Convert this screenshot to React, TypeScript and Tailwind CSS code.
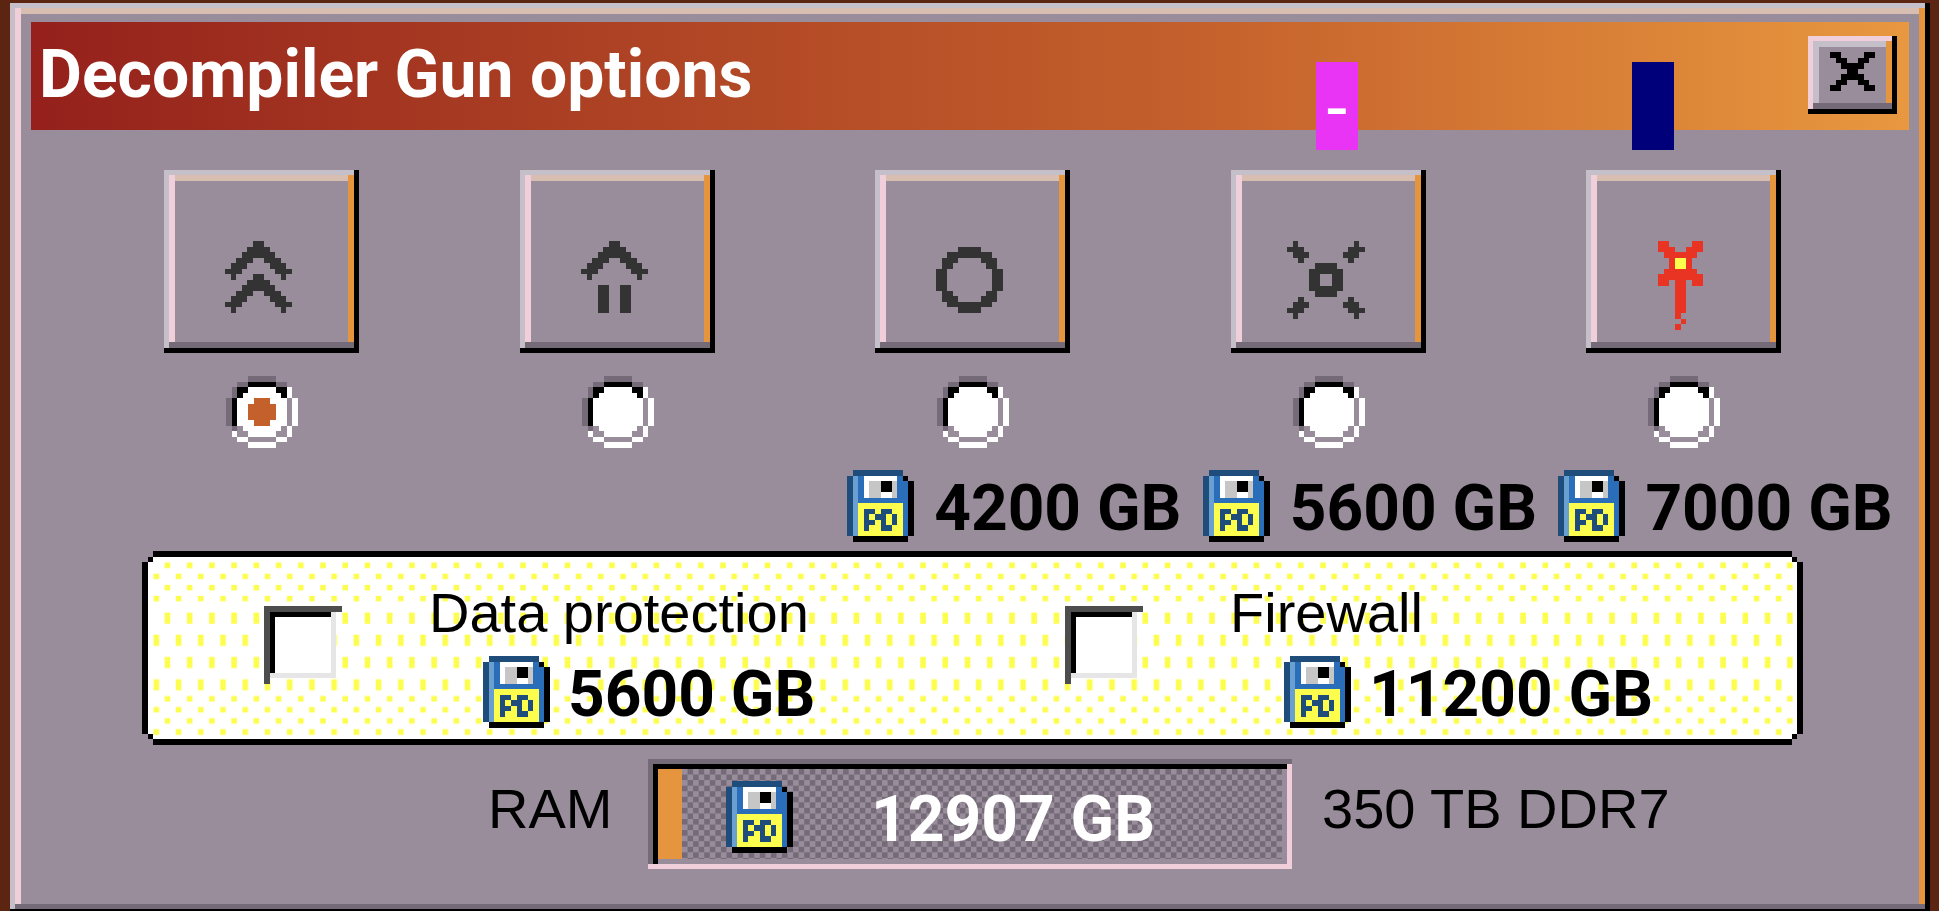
import React, { useState } from "react";

const COLORS: Record<string, string> = {
    k: "#000000",
    w: "#ffffff",
    d: "#756b78",
    i: "#333333",
    r: "#e93323",
    y: "#fdfd4e",
    n: "#1e4d7b",
    b: "#2a6db8",
    l: "#6a9fd1",
    g: "#c6c6c6",
    o: "#c4602c",
    s: "#4d4d4d",
    e: "#e6e6e6",
}

const CHEVRONS = [
    ".....ii.....",
    "....iiii....",
    "...iiiiii...",
    "..iii..iii..",
    ".iii....iii.",
    "iii......iii",
    ".i...ii...i.",
    "....iiii....",
    "...iiiiii...",
    "..iii..iii..",
    ".iii....iii.",
    "iii......iii",
    ".i........i.",
]

const HOUSE = [
    ".....ii.....",
    "....iiii....",
    "...iiiiii...",
    "..iii..iii..",
    ".iii....iii.",
    "iii......iii",
    ".i........i.",
    "............",
    "...ii..ii...",
    "...ii..ii...",
    "...ii..ii...",
    "...ii..ii...",
    "...ii..ii...",
]

const RING = [
    "............",
    "....iiii....",
    "..iiiiiiii..",
    ".iii....iii.",
    ".ii......ii.",
    "ii........ii",
    "ii........ii",
    "ii........ii",
    "ii........ii",
    ".ii......ii.",
    ".iii....iii.",
    "..iiiiiiii..",
    "....iiii....",
]

const BURST = [
    ".i..........i.",
    "iii........iii",
    ".iii......iii.",
    "..i........i..",
    ".....iiii.....",
    "....iiiiii....",
    "....ii..ii....",
    "....ii..ii....",
    "....iiiiii....",
    ".....iiii.....",
    "..i........i..",
    ".iii......iii.",
    "iii........iii",
    ".i..........i.",
]

const FLARE = [
    "rr....rr",
    "rrr..rrr",
    ".rrrrrr.",
    "..ryyr..",
    "..ryyr..",
    ".rrrrrr.",
    "rrrrrrrr",
    "rr.rr.rr",
    "...rr...",
    "...rr...",
    "...rr...",
    "...rr...",
    "...rr...",
    "...r....",
    "....r...",
    "...r....",
]

const CROSS = [
    "kk....kk",
    ".kk..kk.",
    "..kkkk..",
    "...kk...",
    "..kkkk..",
    ".kk..kk.",
    "kk....kk",
]

const FLOPPY = [
    ".nnnnnnnnn..",
    "nlbwwwwwwbk.",
    "nlbwggkkgbbk",
    "nlbwggkkgbbk",
    "nlbwggwwgbbk",
    "nlbbbbbbbbbk",
    "nlyyyyyyyybk",
    "nlynnynnyybk",
    "nlynynnynybk",
    "nlynnynynybk",
    "nlynyynnyybk",
    "nlyyyyyyyybk",
    ".kkkkkkkkkk.",
]

const RADIO = [
    "....ddddd....",
    "..ddkkkkkdd..",
    ".dkkwwwwwkkw.",
    ".dkwwwwwwwkw.",
    "dkwwwwwwwww.w",
    "dkwwwwwwwww.w",
    "dkwwwwwwwww.w",
    "dkwwwwwwwww.w",
    "dkwwwwwwwww.w",
    ".d.wwwwwww.w.",
    ".w..wwwww..w.",
    "..ww.....ww..",
    "....wwwww....",
]

const RADIO_DOT = [
    ".............",
    ".............",
    ".............",
    ".............",
    ".....ooo.....",
    "....ooooo....",
    "....ooooo....",
    "....ooooo....",
    ".....ooo.....",
    ".............",
    ".............",
    ".............",
    ".............",
]

const CHECKBOX = [
    "ssssssssssssss",
    "skkkkkkkkkkke.",
    "skwwwwwwwwwwe.",
    "skwwwwwwwwwwe.",
    "skwwwwwwwwwwe.",
    "skwwwwwwwwwwe.",
    "skwwwwwwwwwwe.",
    "skwwwwwwwwwwe.",
    "skwwwwwwwwwwe.",
    "skwwwwwwwwwwe.",
    "skwwwwwwwwwwe.",
    "skwwwwwwwwwwe.",
    "seeeeeeeeeeee.",
    "s.............",
]

const CHECK = [
    "..............",
    "..............",
    "..............",
    ".........kk...",
    "........kkk...",
    "...k...kkk....",
    "...kk.kkk.....",
    "...kkkkk......",
    "....kkk.......",
    ".....k........",
    "..............",
    "..............",
    "..............",
    "..............",
]

function Sprite({ rows, className }: { rows: string[]; className: string }) {
    return (
        <svg
            viewBox={`0 0 ${rows[0].length} ${rows.length}`}
            preserveAspectRatio="none"
            shapeRendering="crispEdges"
            aria-hidden="true"
            className={className}
        >
            {rows.map((row, y) =>
                row.split("").map((c, x) =>
                    c === "." ? null : <rect key={`${x}-${y}`} x={x} y={y} width="1" height="1" fill={COLORS[c]} />
                )
            )}
        </svg>
    )
}

function Price({ children, className }: { children: React.ReactNode; className: string }) {
    return (
        <div className={`flex items-start h-[72px] whitespace-nowrap ${className}`}>
            <Sprite rows={FLOPPY} className="w-[67px] h-[72px] shrink-0" />
            <span className="font-['Roboto',sans-serif] font-bold text-[64px] leading-[78px]">{children}</span>
        </div>
    )
}

const modes = [
    { name: "Double chevron", icon: CHEVRONS, size: "w-[67px] h-[72px] ml-[61px]", price: "" },
    { name: "House", icon: HOUSE, size: "w-[67px] h-[72px] ml-[61px]", price: "" },
    { name: "Ring", icon: RING, size: "w-[67px] h-[72px] ml-[61px]", price: "4200 GB" },
    { name: "Burst", icon: BURST, size: "w-[78px] h-[78px] ml-[56px]", price: "5600 GB" },
    { name: "Flare", icon: FLARE, size: "w-[45px] h-[89px] ml-[72px]", price: "7000 GB" },
]

const extras = [
    { id: "protection", name: "Data protection", price: "5600 GB" },
    { id: "firewall", name: "Firewall", price: "11200 GB" },
]

export default function App() {
    const [mode, setMode] = useState(0)
    const [checked, setChecked] = useState<string[]>([])

    const toggle = (id: string) => {
        setChecked(checked.includes(id) ? checked.filter((c) => c !== id) : [...checked, id])
    }

    return (
        <div className="min-h-screen flex flex-col overflow-hidden bg-[#5c2511] pt-[3px] pl-[10px] pr-[9px] font-['Liberation_Sans',sans-serif] text-black">
            <main className="flex-1 -mb-[3px] pt-[19px] pb-10 bg-[#998d9c] shadow-[inset_-5px_-5px_0_#000,inset_5px_5px_0_#c5bfc9,inset_0_-10px_0_#756b78,inset_-11px_0_0_#e4953e,inset_11px_0_0_#f0cfda,inset_0_11px_0_#d7beb0]">
                <header className="flex justify-between items-start h-[108px] ml-[21px] mr-[21px] pl-[8px] pr-[12px] pt-[14px] bg-linear-to-r from-[#95201c] via-[#c4602c] via-62% to-[#e8983f]">
                    <h1 className="font-['Roboto',sans-serif] font-bold text-[66px] leading-[78px] text-white whitespace-nowrap">Decompiler Gun options</h1>
                    <button aria-label="Close" className="w-[89px] h-[78px] pt-[16px] pl-[22px] flex items-start bg-[#998d9c] shadow-[inset_-5px_-5px_0_#000,inset_5px_5px_0_#f0cfda,inset_0_-11px_0_#756b78,inset_-11px_0_0_#e4953e,inset_11px_11px_0_#c5bfc9]">
                        <Sprite rows={CROSS} className="w-[45px] h-[39px]" />
                    </button>
                </header>

                <div className="grid grid-cols-5 ml-[126px] mr-[16px] mt-[40px]">
                    {modes.map((item, index) => {
                        return (
                            <div key={item.name} className="relative flex flex-col items-start">
                                {index === 3 && (
                                    <span className="absolute left-[113px] -top-[108px] w-[42px] h-[88px] bg-[#e933f5] text-white text-center font-['DejaVu_Sans_Mono',monospace] text-[70px] leading-[88px]">-</span>
                                )}
                                {index === 4 && (
                                    <span className="absolute left-[74px] -top-[108px] w-[42px] h-[88px] bg-[#00007b]"></span>
                                )}
                                <button
                                    aria-label={item.name}
                                    onClick={() => setMode(index)}
                                    className="w-[195px] h-[183px] ml-[28px] pt-[71px] flex items-start bg-[#998d9c] shadow-[inset_-5px_-5px_0_#000,inset_5px_5px_0_#c5bfc9,inset_0_-11px_0_#756b78,inset_-11px_0_0_#e4953e,inset_11px_0_0_#f0cfda,inset_0_11px_0_#d7beb0]"
                                >
                                    <Sprite rows={item.icon} className={item.size} />
                                </button>
                                <label className="relative block ml-[90px] mt-[23px] size-[72px]">
                                    <input
                                        type="radio"
                                        name="mode"
                                        aria-label={item.name}
                                        checked={mode === index}
                                        onChange={() => setMode(index)}
                                        className="peer absolute inset-0 size-full opacity-0"
                                    />
                                    <Sprite rows={RADIO} className="size-[72px]" />
                                    <Sprite rows={RADIO_DOT} className="absolute inset-0 size-[72px] hidden peer-checked:block" />
                                </label>
                                {item.price && <Price className="mt-[22px] gap-[20px]">{item.price}</Price>}
                            </div>
                        )
                    })}
                </div>

                <section className="relative h-[194px] mt-[9px] ml-[132px] mr-[127px] border-[6px] border-black bg-white [clip-path:polygon(11px_0,calc(100%-11px)_0,calc(100%-11px)_6px,calc(100%-6px)_6px,calc(100%-6px)_11px,100%_11px,100%_calc(100%-11px),calc(100%-6px)_calc(100%-11px),calc(100%-6px)_calc(100%-6px),calc(100%-11px)_calc(100%-6px),calc(100%-11px)_100%,11px_100%,11px_calc(100%-6px),6px_calc(100%-6px),6px_calc(100%-11px),0_calc(100%-11px),0_11px,6px_11px,6px_6px,11px_6px)]">
                    <svg className="absolute inset-0 size-full" aria-hidden="true">
                        <defs>
                            <pattern id="dots" width="4" height="33" patternUnits="userSpaceOnUse" patternTransform="scale(5.556)">
                                <path
                                    fill="#fdfd4e"
                                    d="M3 1h1v1h-1z M1 3h1v1h-1z M3 5h1v1h-1z M1 7h1v1h-1z M3 10h1v2h-1z M1 14h1v2h-1z M3 18h1v2h-1z M1 22h1v2h-1z M3 25h1v1h-1z M1 27h1v1h-1z M3 29h1v1h-1z M1 31h1v1h-1z"
                                />
                            </pattern>
                        </defs>
                        <rect width="100%" height="100%" fill="url(#dots)" />
                    </svg>
                    <span className="absolute left-0 top-0 size-[5px] bg-black"></span>
                    <span className="absolute right-0 top-0 size-[5px] bg-black"></span>
                    <span className="absolute left-0 bottom-0 size-[5px] bg-black"></span>
                    <span className="absolute right-0 bottom-0 size-[5px] bg-black"></span>

                    <div className="relative grid grid-cols-2 pr-[47px]">
                        {extras.map((item) => {
                            return (
                                <div key={item.id} className="flex items-start pl-[116px]">
                                    <div className="relative mt-[49px] size-[78px] shrink-0">
                                        <input
                                            id={item.id}
                                            type="checkbox"
                                            checked={checked.includes(item.id)}
                                            onChange={() => toggle(item.id)}
                                            className="peer absolute inset-0 size-full opacity-0"
                                        />
                                        <Sprite rows={CHECKBOX} className="size-[78px]" />
                                        <Sprite rows={CHECK} className="absolute inset-0 size-[78px] hidden peer-checked:block" />
                                    </div>
                                    <div className="ml-[87px] pt-[20px]">
                                        <label htmlFor={item.id} className="block text-[56px] leading-[72px] whitespace-nowrap">{item.name}</label>
                                        <Price className="mt-[7px] ml-[54px] gap-[18px]">{item.price}</Price>
                                    </div>
                                </div>
                            )
                        })}
                    </div>
                </section>

                <div className="flex items-start mt-[14px] pl-[478px] whitespace-nowrap">
                    <span className="w-[160px] text-[56px] leading-[100px]">RAM</span>
                    <div className="w-[644px] h-[110px] p-[10px] flex shadow-[inset_0_-5px_0_#f0cfda,inset_5px_5px_0_#756b78,inset_-5px_0_0_#f0cfda,inset_10px_10px_0_#000]">
                        <div className="w-[24px] bg-[#e4953e]"></div>
                        <div className="relative flex-1">
                            <svg className="absolute inset-0 size-full" aria-hidden="true">
                                <defs>
                                    <pattern id="mesh" width="2" height="2" patternUnits="userSpaceOnUse" patternTransform="scale(5.556)">
                                        <path fill="#756b78" d="M1 0h1v1h-1z M0 1h1v1h-1z" />
                                    </pattern>
                                </defs>
                                <rect width="100%" height="100%" fill="url(#mesh)" />
                            </svg>
                            <Price className="relative mt-[12px] ml-[44px] gap-[78px] text-white">12907 GB</Price>
                        </div>
                    </div>
                    <span className="ml-[30px] text-[56px] leading-[100px]">350 TB DDR7</span>
                </div>
            </main>
        </div>
    )
}
